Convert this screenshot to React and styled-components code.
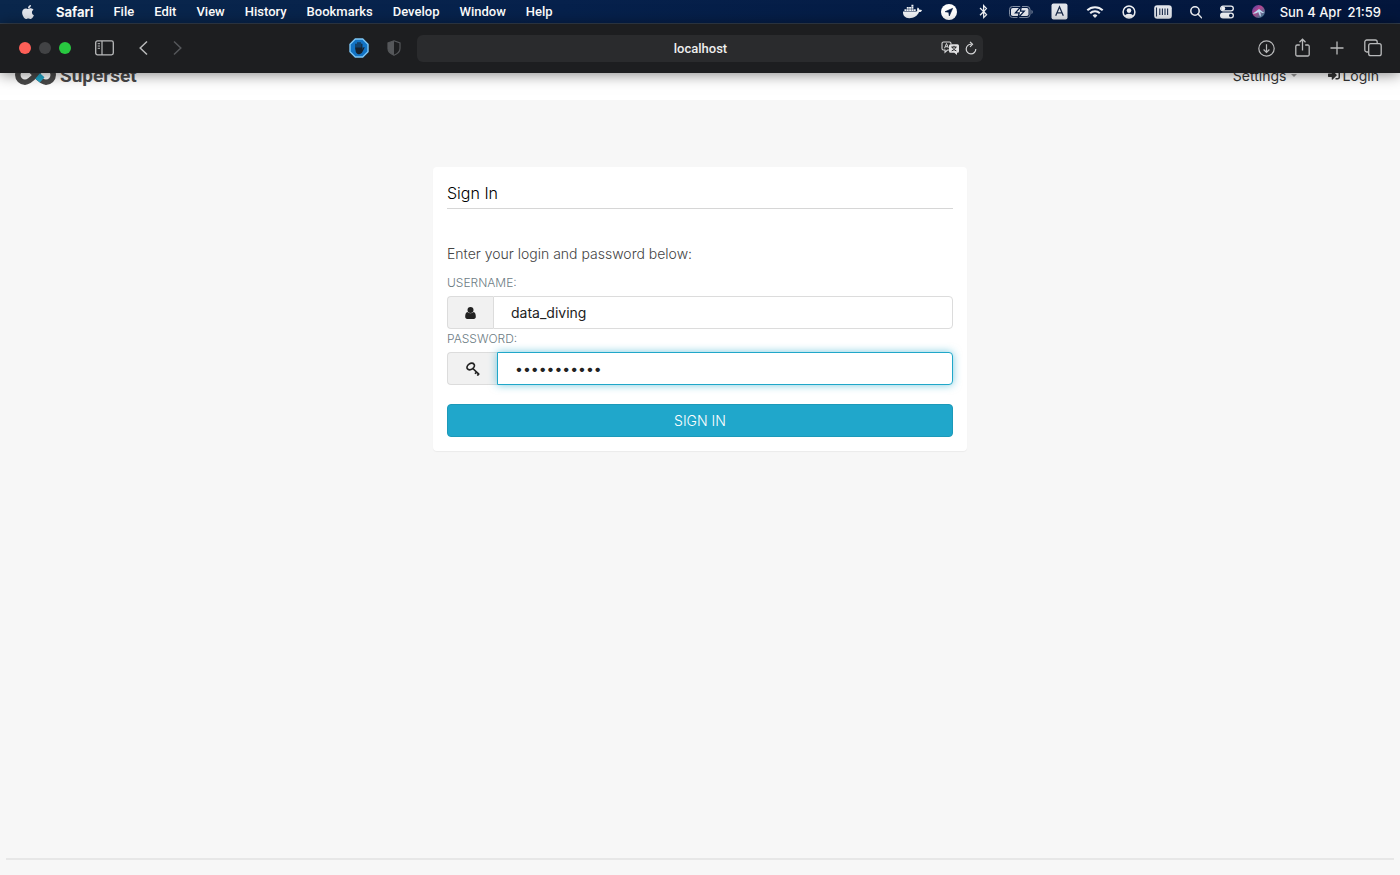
import { useState } from "react";
import styled, { createGlobalStyle } from "styled-components";
import { FaApple, FaBluetoothB, FaDocker, FaSignInAlt } from "react-icons/fa";

const GlobalStyle = createGlobalStyle`
  * {
    box-sizing: border-box;
  }
  body {
    margin: 0;
    background-color: #f7f7f7;
    color: #333;
    font-family: Inter, "Liberation Sans", sans-serif;
    font-size: 14px;
  }
  svg {
    display: block;
    flex-shrink: 0;
  }
`;

const Screen = styled.div`
  display: flex;
  flex-direction: column;
  min-height: 100vh;
`;

/* macOS menu bar */
const MenuBar = styled.header`
  display: flex;
  justify-content: space-between;
  height: 24px;
  padding: 0 19px 0 20px;
  background: linear-gradient(90deg, #0a274c, #06214c 40%, #03163c);
  border-bottom: 1px solid #34404f;
  color: white;
  font-size: 13px;
`;
const Menus = styled.nav`
  display: flex;
  align-items: center;
  gap: 20px;
`;
const MenuLink = styled.a`
  color: white;
  font-family: ${props => (props.$bold ? "Inter" : "Roboto")}, sans-serif;
  font-weight: ${props => (props.$bold ? 700 : 500)};
  line-height: 16px;
  text-decoration: none;
  white-space: nowrap;
`;
const Status = styled.div`
  display: flex;
  align-items: center;
  gap: 15px;
`;
const Clock = styled.span`
  display: flex;
  gap: 6px;
  font-weight: 500;
  line-height: 16px;
  white-space: nowrap;
`;

/* Safari toolbar */
const Toolbar = styled.div`
  position: relative;
  z-index: 2;
  display: grid;
  grid-template-columns: 1fr minmax(0, 566px) 1fr;
  align-items: center;
  height: 49px;
  padding-bottom: 1px;
  background-color: #1d1e20;
  box-shadow: 0 1px 14px rgb(0 0 0 / 50%);
  color: #b9babb;
`;
const ToolbarSide = styled.div`
  display: flex;
  align-items: center;
  justify-content: ${props => (props.$end ? "flex-end" : "space-between")};
  gap: 20px;
  padding: 0 ${props => (props.$end ? "18px" : "16px")} 0 19px;
`;
const Group = styled.div`
  display: flex;
  align-items: center;
  gap: ${props => props.$gap}px;
`;
const Light = styled.button`
  width: 12px;
  height: 12px;
  padding: 0;
  border: 0;
  border-radius: 50%;
  background-color: ${props => props.$color};
`;
const ToolButton = styled.button`
  display: flex;
  padding: 0;
  border: 0;
  background: none;
  color: ${props => (props.$dim ? "#55575a" : "inherit")};
`;
const Address = styled.div`
  display: flex;
  align-items: center;
  gap: 6px;
  height: 27px;
  padding: 0 6px 0 49px;
  border-radius: 6px;
  background-color: #2a2b2d;
`;
const AddressInput = styled.input`
  flex: 1;
  min-width: 0;
  padding: 0;
  border: 0;
  outline: 0;
  background: none;
  color: #eee;
  font: 500 13px Roboto, sans-serif;
  text-align: center;
`;

/* Superset page, scrolled so that the top half of the navbar is hidden */
const NavClip = styled.div`
  display: flex;
  align-items: flex-end;
  height: 27px;
  overflow: hidden;
  background-color: white;
`;
const Navbar = styled.nav`
  display: flex;
  flex: 1;
  align-items: center;
  justify-content: space-between;
  height: 50px;
  padding: 0 21px 0 15px;
`;
const Brand = styled.a`
  display: flex;
  align-items: center;
  gap: 4px;
  color: #484848;
  font: 700 19px Roboto, sans-serif;
  text-decoration: none;
`;
const NavLink = styled.a`
  display: flex;
  align-items: center;
  gap: ${props => props.$gap}px;
  color: #333;
  text-decoration: none;
`;
const Caret = styled.span`
  border: 3px solid transparent;
  border-top-color: #999;
  border-bottom: 0;
`;

const Main = styled.main`
  display: flex;
  flex: 1;
  align-items: flex-start;
  justify-content: center;
  padding: 67px 16px 40px;
`;
const Card = styled.form`
  width: 100%;
  max-width: 534px;
  padding: 14px;
  border-radius: 4px;
  background-color: white;
  box-shadow: 0 1px 1px rgb(0 0 0 / 5%);
`;
const Title = styled.h1`
  margin: 0 0 35px;
  padding-bottom: 3px;
  border-bottom: 1px solid #d6d6d6;
  color: #000;
  font-size: 16px;
  font-weight: 300;
  line-height: 24px;
`;
const Hint = styled.p`
  margin: 0;
  color: #444;
  font-weight: 300;
  line-height: 20px;
`;
const Label = styled.label`
  display: block;
  margin-top: ${props => (props.$spaced ? 12 : 3)}px;
  color: #6d7c84;
  font-size: 12px;
  font-weight: 300;
  line-height: 14px;
`;
const InputGroup = styled.div`
  display: flex;
  height: 33px;
  margin-top: 6px;
`;
const Addon = styled.span`
  display: flex;
  align-items: center;
  justify-content: center;
  width: ${props => props.$width}px;
  border: 1px solid #dcdcdc;
  border-right: 0;
  border-radius: 4px 0 0 4px;
  background-color: #f1f1f1;
  color: #222;
`;
const Input = styled.input`
  flex: 1;
  min-width: 0;
  padding: 0 17px;
  border: 1px solid ${props => (props.$active ? "#20a7c9" : "#dcdcdc")};
  border-radius: 0 4px 4px 0;
  outline: 0;
  background-color: white;
  box-shadow: ${props => (props.$active ? "0 0 8px rgb(32 167 201 / 60%)" : "none")};
  color: #222;
  font: 400 14px Inter, sans-serif;
`;
const SubmitButton = styled.button`
  display: block;
  width: 100%;
  height: 33px;
  margin-top: 19px;
  border: 1px solid #1c99b9;
  border-radius: 4px;
  background-color: #20a7cb;
  color: white;
  font: 300 14px Inter, sans-serif;
  text-transform: uppercase;
`;
const Footer = styled.footer`
  margin: 0 6px 15px;
  border-top: 2px solid #e7e7e7;
`;

const menus = ["File", "Edit", "View", "History", "Bookmarks", "Develop", "Window", "Help"];

function StatusIcons() {
  return (
    <Group $gap={18}>
      <FaDocker size={19} color="#f0f2f5" />
      <svg width="18" height="18" viewBox="0 0 18 18">
        <circle cx="9" cy="9" r="8" fill="#fff" />
        <path d="M12.700 5.300 5 8.700 8.700 9.300 9.300 13Z" fill="#041a42" stroke="#041a42" strokeWidth=".6" />
      </svg>
      <FaBluetoothB size={15} color="#f0f2f5" />
      <svg width="24" height="14" viewBox="0 0 24 14">
        <rect x=".5" y="1.500" width="20.500" height="11" rx="3" fill="none" stroke="#8490a5" />
        <rect x="2" y="3" width="17.500" height="8" rx="1.800" fill="#e3e6ec" />
        <path d="M22.500 5v4c1.600-.8 1.600-3.200 0-4Z" fill="#8490a5" />
        <path d="M12.500 1 6.500 7.800h3.700L9 13l6.200-6.800h-3.800Z" fill="#fff" stroke="#041a42" strokeWidth="1.300" />
      </svg>
      <svg width="17" height="17" viewBox="0 0 17 17">
        <rect x=".5" y=".5" width="16" height="16" rx="2" fill="#e3e6ec" />
        <path d="m4.700 12.800 3.800-9 3.800 9M6 9.800h5" fill="none" stroke="#1b2c4b" strokeWidth="1.300" />
      </svg>
      <svg width="18" height="14" viewBox="0 0 18 14" fill="none" stroke="#f0f2f5" strokeWidth="2">
        <path d="M1.300 5.300a11 11 0 0 1 15.400 0M4.200 8.200a6.800 6.800 0 0 1 9.600 0" />
        <path d="M9 13 6.600 10.500a3.500 3.500 0 0 1 4.800 0Z" fill="#f0f2f5" stroke="none" />
      </svg>
      <svg width="14" height="14" viewBox="0 0 14 14">
        <circle cx="7" cy="7" r="5.900" fill="none" stroke="#f0f2f5" strokeWidth="1.500" />
        <circle cx="7" cy="5.600" r="2.300" fill="#f0f2f5" />
        <path d="M2.800 11c1-3 7.400-3 8.400 0-2 2.400-6.400 2.400-8.400 0Z" fill="#f0f2f5" />
      </svg>
      <svg width="18" height="14" viewBox="0 0 18 14">
        <rect x=".2" y=".2" width="17.600" height="13.600" rx="3" fill="#e3e6ec" />
        <path d="M2.500 2.500v9M5.800 3.500v6.500M8.400 3.500v6.500M11 3.500v6.500M13.600 3.500v6.500" stroke="#1b2c4b" strokeWidth="1.100" />
      </svg>
      <svg width="12" height="14" viewBox="0 0 12 14" fill="none" stroke="#f0f2f5" strokeWidth="1.500">
        <circle cx="5" cy="6" r="4.200" />
        <path d="m8 9 3.600 3.800" strokeLinecap="round" />
      </svg>
      <svg width="14" height="14" viewBox="0 0 14 14">
        <rect x=".7" y="1.200" width="12.600" height="4.600" rx="2.300" fill="none" stroke="#f0f2f5" strokeWidth="1.300" />
        <circle cx="3.200" cy="3.500" r="2" fill="#f0f2f5" />
        <rect x="0" y="7.500" width="14" height="6" rx="3" fill="#f0f2f5" />
        <circle cx="10.800" cy="10.500" r="1.800" fill="#041a42" />
      </svg>
      <svg width="13" height="13" viewBox="0 0 13 13">
        <defs>
          <linearGradient id="siri" x1="0" y1="0" x2="1" y2="1">
            <stop offset="0" stopColor="#3b46a8" />
            <stop offset=".4" stopColor="#b8458f" />
            <stop offset="1" stopColor="#238f9a" />
          </linearGradient>
        </defs>
        <circle cx="6.500" cy="6.500" r="6.500" fill="url(#siri)" />
        <path d="M.5 8.500C3 7.500 4.500 5.500 7 4c2 1 3 3 5.500 4-2 .2-3.300-.4-4.500-1.200 1 2 1 3.700.5 5C7 10 7 8.500 6.200 7 4.700 8.300 2.500 9 .5 8.500Z" fill="#bfe0f5" />
      </svg>
    </Group>
  );
}

export default function App() {
  const [url, setUrl] = useState("localhost");
  const [username, setUsername] = useState("data_diving");
  const [password, setPassword] = useState("superset123");

  return (
    <Screen>
      <GlobalStyle />
      <MenuBar>
        <Menus aria-label="Menu bar">
          <MenuLink href="#" aria-label="Apple">
            <FaApple size={16} color="#e3e6ec" />
          </MenuLink>
          <MenuLink href="#" $bold>Safari</MenuLink>
          {menus.map(name => (
            <MenuLink key={name} href="#">{name}</MenuLink>
          ))}
        </Menus>
        <Status>
          <StatusIcons />
          <Clock>
            <span>Sun 4 Apr</span>
            <span>21:59</span>
          </Clock>
        </Status>
      </MenuBar>

      <Toolbar>
        <ToolbarSide>
          <Group $gap={24}>
            <Group $gap={8}>
              <Light $color="#fe5f57" aria-label="Close" />
              <Light $color="#424345" aria-label="Minimize" />
              <Light $color="#28c840" aria-label="Zoom" />
            </Group>
            <Group $gap={25}>
              <ToolButton aria-label="Sidebar">
                <svg width="19" height="16" viewBox="0 0 19 16" fill="none" stroke="currentColor">
                  <rect x=".7" y=".9" width="17.600" height="14" rx="1.800" strokeWidth="1.300" />
                  <path d="M7 1v14" strokeWidth="1.200" />
                  <path d="M2.700 3.700h2.300M2.700 6h2.300M2.700 8.300h2.300" />
                </svg>
              </ToolButton>
              <ToolButton aria-label="Back">
                <svg width="9" height="16" viewBox="0 0 9 16" fill="none" stroke="currentColor" strokeWidth="1.500">
                  <path d="M8 1.500 1.200 8 8 14.500" />
                </svg>
              </ToolButton>
              <ToolButton aria-label="Forward" $dim>
                <svg width="9" height="16" viewBox="0 0 9 16" fill="none" stroke="currentColor" strokeWidth="1.500">
                  <path d="M1 1.500 7.800 8 1 14.500" />
                </svg>
              </ToolButton>
            </Group>
          </Group>
          <Group $gap={18}>
            <ToolButton aria-label="Ad blocker">
              <svg width="20" height="20" viewBox="0 0 20 20">
                <path d="M6.300 1h7.400L19 6.300v7.400L13.700 19H6.300L1 13.700V6.300Z" fill="#1273c4" stroke="#7cc6f5" strokeWidth="1.400" />
                <path d="M7 11V6M9 10V4.500M11 10V4.500M12.800 10.500V6" stroke="#17212c" strokeWidth="1.200" strokeLinecap="round" />
                <path d="M6.400 9.500h7v2l1.300-2.500 1 .6-2.300 4.500c-1.200 2.500-4.500 2.600-6 .8-.9-1.200-1-3-1-5.400Z" fill="#17212c" />
              </svg>
            </ToolButton>
            <ToolButton aria-label="Privacy report" $dim>
              <svg width="14" height="16" viewBox="0 0 14 16">
                <path d="M7 .8 13 3v5.500c0 3-2.500 5.300-6 6.800-3.500-1.500-6-3.800-6-6.800V3Z" fill="none" stroke="currentColor" strokeWidth="1.200" />
                <path d="M7 .8v14.500c-3.500-1.500-6-3.800-6-6.800V3Z" fill="currentColor" />
              </svg>
            </ToolButton>
          </Group>
        </ToolbarSide>
        <Address>
          <AddressInput
            aria-label="Address"
            value={url}
            onChange={e => setUrl(e.target.value)}
          />
          <ToolButton aria-label="Translate">
            <svg width="18" height="14" viewBox="0 0 18 14">
              <path d="M8 9H6.500L4 11.200V9H2.500A1.500 1.500 0 0 1 1 7.500v-5A1.500 1.500 0 0 1 2.500 1h6A1.500 1.500 0 0 1 10 2.500V3" fill="none" stroke="#d5d6d7" strokeWidth="1.100" />
              <path d="m3.500 7.300 2-4.800 1.800 4.300M4.300 5.700h2.500" fill="none" stroke="#d5d6d7" />
              <path d="M9.500 3.300h7A1.500 1.500 0 0 1 18 4.800v5.400a1.500 1.500 0 0 1-1.500 1.500H16V14l-2.700-2.300H9.500A1.500 1.500 0 0 1 8 10.200V4.800a1.500 1.500 0 0 1 1.500-1.500Z" fill="#e2e2e3" />
              <path d="M10.300 6h5.400M13 4.800V6M14.700 6c-.6 2-2 3.200-4 3.900M11.400 6c.6 2 2 3.200 4 3.900" fill="none" stroke="#2a2b2d" />
            </svg>
          </ToolButton>
          <ToolButton aria-label="Reload">
            <svg width="12" height="14" viewBox="0 0 12 14" fill="none" stroke="#d5d6d7" strokeWidth="1.200">
              <path d="M6.500 3.300A4.800 4.800 0 1 0 10.800 8" />
              <path d="M5 .8 7.500 3.300 5 5.800" />
            </svg>
          </ToolButton>
        </Address>
        <ToolbarSide $end>
          <ToolButton aria-label="Downloads">
            <svg width="17" height="17" viewBox="0 0 17 17" fill="none" stroke="currentColor" strokeWidth="1.200">
              <circle cx="8.500" cy="8.500" r="7.700" />
              <path d="M8.500 4.300v8M5.600 9.500l2.900 2.900 2.900-2.900" />
            </svg>
          </ToolButton>
          <ToolButton aria-label="Share">
            <svg width="15" height="20" viewBox="0 0 15 20" fill="none" stroke="currentColor" strokeWidth="1.300">
              <path d="M4.800 7H2.200A1.400 1.400 0 0 0 .8 8.400v8.200A1.400 1.400 0 0 0 2.200 18h10.600a1.400 1.400 0 0 0 1.400-1.400V8.400A1.400 1.400 0 0 0 12.800 7h-2.600M7.500 12.500V1.300M4.500 4.200l3-3 3 3" />
            </svg>
          </ToolButton>
          <ToolButton aria-label="New tab">
            <svg width="14" height="14" viewBox="0 0 14 14" stroke="currentColor" strokeWidth="1.300">
              <path d="M7 .5v13M.5 7h13" />
            </svg>
          </ToolButton>
          <ToolButton aria-label="Tab overview">
            <svg width="18" height="18" viewBox="0 0 18 18" fill="none" stroke="currentColor" strokeWidth="1.300">
              <rect x="4.700" y="4.700" width="12.500" height="12" rx="2" />
              <path d="M4.500 13H2.800a2 2 0 0 1-2-2V3a2 2 0 0 1 2-2h8.400a2 2 0 0 1 2 2v1.500" />
            </svg>
          </ToolButton>
        </ToolbarSide>
      </Toolbar>

      <NavClip>
        <Navbar aria-label="Superset">
          <Brand href="#">
            <svg width="41" height="20" viewBox="0 0 41 20" fill="none" strokeWidth="5.500">
              <path d="M20.500 10C16 5 13.500 2.800 10 2.800a7.200 7.200 0 0 0 0 14.400c3.500 0 6-2.200 10.500-7.200S27.500 2.800 31 2.800a7.200 7.200 0 0 1 0 14.400c-3.500 0-6-2.200-10.500-7.200Z" stroke="#484848" />
              <path d="M27.200 10.200 22.600 15.600" stroke="#20a7c9" strokeWidth="6" />
            </svg>
            Superset
          </Brand>
          <Group $gap={31}>
            <NavLink href="#" $gap={5}>
              Settings
              <Caret />
            </NavLink>
            <NavLink href="#" $gap={2}>
              <FaSignInAlt size={12} />
              Login
            </NavLink>
          </Group>
        </Navbar>
      </NavClip>

      <Main>
        <Card onSubmit={e => e.preventDefault()}>
          <Title>Sign In</Title>
          <Hint>Enter your login and password below:</Hint>
          <Label htmlFor="username" $spaced>USERNAME:</Label>
          <InputGroup>
            <Addon $width={46}>
              <svg width="11" height="12" viewBox="0 0 11 12" fill="currentColor">
                <circle cx="5.500" cy="3" r="3" />
                <path d="M2.500 5C.8 5.400.2 7.300.2 9.800c0 1.300.8 2.200 2 2.200h6.600c1.200 0 2-.9 2-2.200 0-2.500-.6-4.400-2.300-4.800-1.600 1.600-4.400 1.600-6 0Z" />
              </svg>
            </Addon>
            <Input
              id="username"
              value={username}
              onChange={e => setUsername(e.target.value)}
            />
          </InputGroup>
          <Label htmlFor="password">PASSWORD:</Label>
          <InputGroup>
            <Addon $width={50}>
              <svg width="14" height="14" viewBox="0 0 14 14" fill="none" stroke="currentColor" strokeWidth="1.700">
                <ellipse cx="4.700" cy="4.500" rx="4" ry="2.900" transform="rotate(-35 4.700 4.500)" />
                <path d="m6.800 6.500 6 5.700M9 11.800l2-2.200M11.300 13.600l1.900-2.200" />
              </svg>
            </Addon>
            <Input
              id="password"
              type="password"
              value={password}
              onChange={e => setPassword(e.target.value)}
              $active
            />
          </InputGroup>
          <SubmitButton type="submit">Sign In</SubmitButton>
        </Card>
      </Main>
      <Footer />
    </Screen>
  );
}
